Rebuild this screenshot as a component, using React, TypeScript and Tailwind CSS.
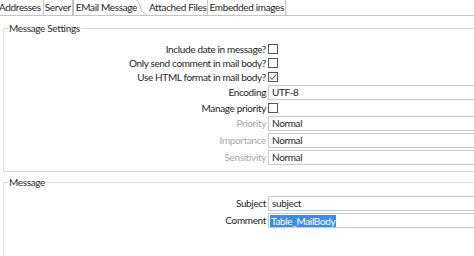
import React from "react";

const font = { fontFamily: 'Lato, "Noto Sans", "Liberation Sans", sans-serif' };

const Checkbox = ({ checked = false }: { checked?: boolean }) => (
  <span className="w-[10px] h-[10px] border border-[#555] bg-white flex items-center justify-center">
    {checked && (
      <svg width="8" height="8" viewBox="0 0 8 8">
        <path d="M1 4.2 L3.1 6.3 L7 1.6" stroke="#333" strokeWidth="1" fill="none" />
      </svg>
    )}
  </span>
);

const CheckRow = ({ label, checked }: { label: string; checked?: boolean }) => (
  <div className="flex items-center h-[14px]">
    <span className="w-[264px] pr-[2px] text-right text-[#1e1e1e]">{label}</span>
    <Checkbox checked={checked} />
  </div>
);

const FieldRow = ({
  label,
  value,
  disabled = false,
  selected = false,
}: {
  label: string;
  value: string;
  disabled?: boolean;
  selected?: boolean;
}) => (
  <div className="flex items-center h-[17px]">
    <span className={`w-[264px] pr-[2px] text-right ${disabled ? "text-[#a8a8a8]" : "text-[#1e1e1e]"}`}>{label}</span>
    <div className="flex-1 h-[15px] border border-[#c9c9c9] bg-white flex items-center px-[3px] text-[#1e1e1e]">
      {selected ? <span className="bg-[#3b8ee8] text-white leading-[12px] px-[1px] -ml-[2px]">{value}</span> : value}
    </div>
  </div>
);

const tabs = ["Addresses", "Server", "EMail Message", "Attached Files", "Embedded images"];

export default function App() {
  return (
    <div className="w-[474px] h-[256px] overflow-hidden bg-white text-[10px] tracking-[-0.35px]" style={font}>
      <div className="w-[500px]">
        {/* Tabs */}
        <div className="flex h-[16px] border-b border-[#c4c4c4] items-end">
          {tabs.map((t, i) => (
            <div
              key={t}
              className={
                i === 2
                  ? "h-[16px] flex items-center pl-[2px] pr-[11px] bg-white border-l border-[#b8b8b8] relative text-[#1e1e1e]"
                  : i === 0
                  ? "h-[15px] flex items-center pl-0 pr-[2px] -ml-[1px] border-r border-[#c4c4c4] text-[#1e1e1e]"
                  : "h-[15px] flex items-center px-[1px] border-r border-[#c4c4c4] text-[#1e1e1e]"
              }
            >
              {t}
              {i === 2 && (
                <svg className="absolute right-0 top-0" width="12" height="16" viewBox="0 0 12 16">
                  <path d="M0 0.5 C4 0.5 4 15.5 11 15.5" stroke="#b8b8b8" fill="none" />
                </svg>
              )}
            </div>
          ))}
        </div>

        {/* Message Settings */}
        <fieldset className="ml-[3px] mt-[5px] border border-[#dcdcdc] h-[151px] pt-[6px]">
          <legend className="ml-[4px] px-[1px] text-[#2a2a2a]">Message Settings</legend>
          <div className="flex flex-col">
            <CheckRow label="Include date in message?" />
            <CheckRow label="Only send comment in mail body?" />
            <CheckRow label="Use HTML format in mail body?" checked />
            <FieldRow label="Encoding" value="UTF-8" />
            <CheckRow label="Manage priority" />
            <FieldRow label="Priority" value="Normal" disabled />
            <FieldRow label="Importance" value="Normal" disabled />
            <FieldRow label="Sensitivity" value="Normal" disabled />
          </div>
        </fieldset>

        {/* Message */}
        <fieldset className="ml-[3px] mt-[3px] border border-[#dcdcdc] h-[90px] pt-[5px]">
          <legend className="ml-[4px] px-[1px] text-[#2a2a2a]">Message</legend>
          <div className="flex flex-col">
            <FieldRow label="Subject" value="subject" />
            <FieldRow label="Comment" value="Table_MailBody" selected />
          </div>
        </fieldset>
      </div>
    </div>
  );
}
